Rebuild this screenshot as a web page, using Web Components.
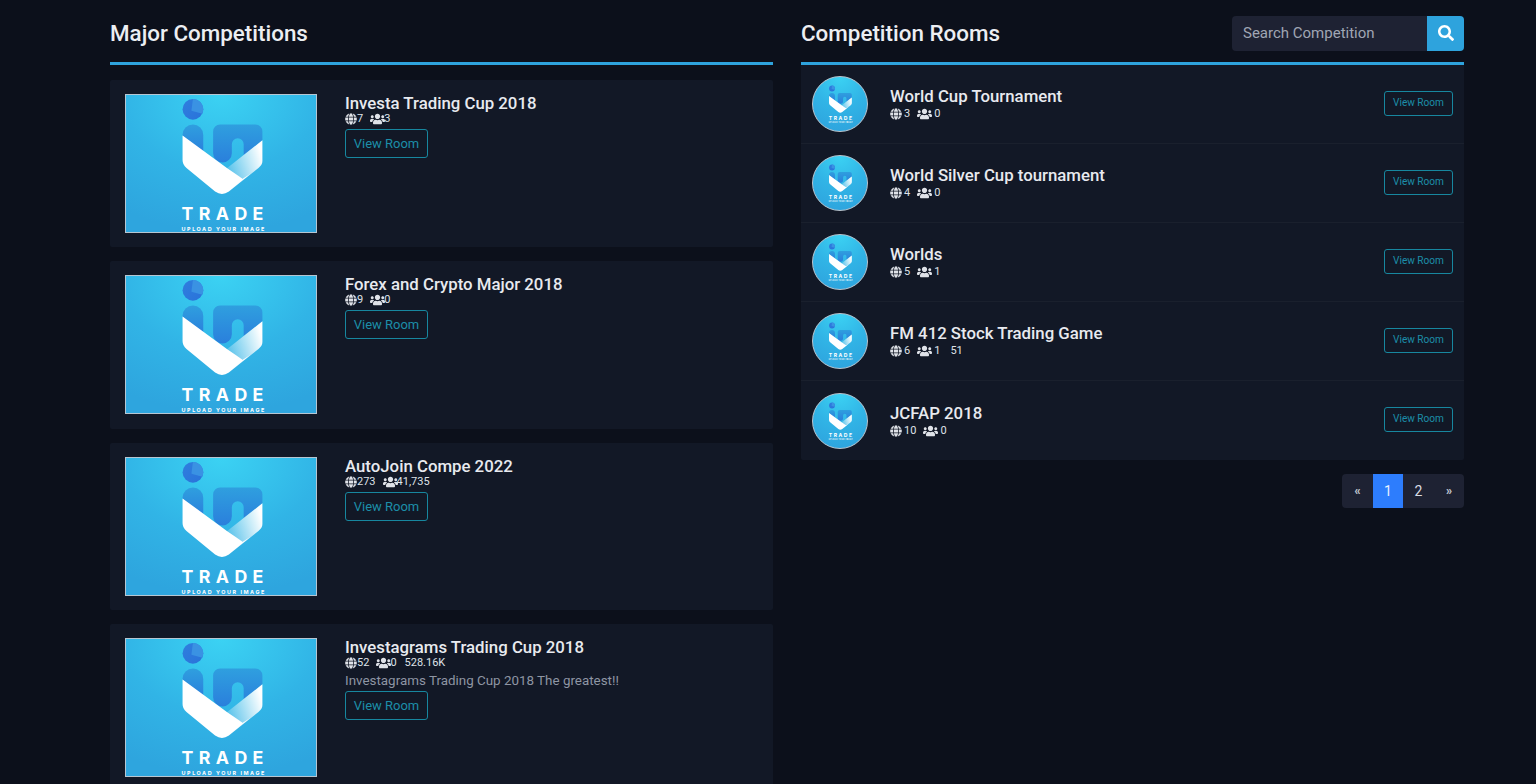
<!DOCTYPE html>
<html>
<head>
<meta charset="utf-8">
<title>Competitions</title>
<style>
  html, body { margin: 0; height: 100%; overflow: hidden; background: #0c101b; }
  body { font-family: Roboto, "Liberation Sans", sans-serif; color: #e8eaef; }
</style>
</head>
<body>
<competition-page>
  <section-column slot="left" heading="Major Competitions">
    <competition-card name="Investa Trading Cup 2018">
      <stat-line tight rooms="7" people="3"></stat-line>
    </competition-card>
    <competition-card name="Forex and Crypto Major 2018">
      <stat-line tight rooms="9" people="0"></stat-line>
    </competition-card>
    <competition-card name="AutoJoin Compe 2022">
      <stat-line tight rooms="273" people="41,735"></stat-line>
    </competition-card>
    <competition-card name="Investagrams Trading Cup 2018" about="Investagrams Trading Cup 2018 The greatest!!">
      <stat-line tight rooms="52" people="0" extra="528.16K"></stat-line>
    </competition-card>
  </section-column>

  <section-column slot="right" heading="Competition Rooms">
    <search-box slot="tools"></search-box>
    <room-list>
      <room-row name="World Cup Tournament"><stat-line rooms="3" people="0"></stat-line></room-row>
      <room-row name="World Silver Cup tournament"><stat-line rooms="4" people="0"></stat-line></room-row>
      <room-row name="Worlds"><stat-line rooms="5" people="1"></stat-line></room-row>
      <room-row name="FM 412 Stock Trading Game"><stat-line rooms="6" people="1" extra="51"></stat-line></room-row>
      <room-row name="JCFAP 2018"><stat-line rooms="10" people="0"></stat-line></room-row>
    </room-list>
    <page-nav></page-nav>
  </section-column>
</competition-page>

<script>
const GLOBE = "M336.5 160C322 70.7 287.8 8 248 8s-74 62.7-88.5 152h177zM152 256c0 22.2 1.2 43.5 3.3 64h185.3c2.1-20.5 3.3-41.8 3.3-64s-1.2-43.5-3.3-64H155.3c-2.1 20.5-3.3 41.8-3.3 64zm324.7-96c-28.6-67.9-86.5-120.4-158-141.6 24.4 33.8 41.2 84.7 50 141.6h108zM177.2 18.4C105.8 39.6 47.8 92.1 19.3 160h108c8.7-56.9 25.5-107.8 49.9-141.6zM487.4 192H372.7c2.1 21 3.3 42.5 3.3 64s-1.2 43-3.3 64h114.6c5.5-20.5 8.6-41.8 8.6-64s-3.1-43.5-8.5-64zM120 256c0-21.5 1.2-43 3.3-64H8.6C3.2 212.5 0 233.8 0 256s3.2 43.5 8.6 64h114.6c-2-21-3.2-42.5-3.2-64zm39.5 96c14.5 89.3 48.7 152 88.5 152s74-62.7 88.5-152h-177zm159.3 141.6c71.4-21.2 129.4-73.7 158-141.6h-108c-8.8 56.9-25.6 107.8-50 141.6zM19.3 352c28.6 67.9 86.5 120.4 158 141.6-24.4-33.8-41.2-84.7-50-141.6h-108z";
const USERS = "M96 224c35.3 0 64-28.7 64-64s-28.7-64-64-64-64 28.7-64 64 28.7 64 64 64zm448 0c35.3 0 64-28.7 64-64s-28.7-64-64-64-64 28.7-64 64 28.7 64 64 64zm32 32h-64c-17.6 0-33.5 7.1-45.1 18.6 40.3 22.1 68.9 62 75.1 109.4h66c17.7 0 32-14.3 32-32v-32c0-35.3-28.7-64-64-64zm-256 0c61.9 0 112-50.1 112-112S381.9 32 320 32 208 82.1 208 144s50.1 112 112 112zm76.8 32h-8.3c-20.8 10-43.9 16-68.5 16s-47.6-6-68.5-16h-8.3C179.6 288 128 339.6 128 403.2V432c0 26.5 21.5 48 48 48h288c26.5 0 48-21.5 48-48v-28.8c0-63.6-51.6-115.2-115.2-115.2zm-223.7-13.4C161.5 263.1 145.6 256 128 256H64c-35.3 0-64 28.7-64 64v32c0 17.7 14.3 32 32 32h65.9c6.3-47.4 34.9-87.3 75.2-109.4z";
const SEARCH = "M505 442.7L405.3 343c-4.5-4.5-10.6-7-17-7H372c27.6-35.3 44-79.7 44-128C416 93.1 322.9 0 208 0S0 93.1 0 208s93.1 208 208 208c48.3 0 92.7-16.4 128-44v16.3c0 6.4 2.5 12.5 7 17l99.7 99.7c9.4 9.4 24.6 9.4 33.9 0l28.3-28.3c9.4-9.4 9.4-24.6.1-34zM208 336c-70.7 0-128-57.2-128-128 0-70.7 57.2-128 128-128 70.7 0 128 57.2 128 128 0 70.7-57.2 128-128 128z";

class CompetitionPage extends HTMLElement {
  constructor() {
    super();
    this.attachShadow({ mode: "open" });
    this.shadowRoot.innerHTML = `
      <style>
        :host { display: grid; grid-template-columns: 663px 663px; column-gap: 28px; padding-left: 110px; height: 784px; overflow: hidden; }
      </style>
      <slot name="left"></slot>
      <slot name="right"></slot>`;
  }
}

class SectionColumn extends HTMLElement {
  constructor() {
    super();
    this.attachShadow({ mode: "open" });
    this.shadowRoot.innerHTML = `
      <style>
        :host { display: block; }
        header { display: flex; align-items: center; justify-content: space-between; height: 62px; box-sizing: border-box; padding-top: 5px; padding-bottom: 1px; }
        h2 { margin: 0; font: 500 22.4px/1.2 Roboto, sans-serif; color: #eceef2; }
        .rule { height: 3px; background: #2ea3dd; }
      </style>
      <header><h2></h2><slot name="tools"></slot></header>
      <div class="rule"></div>
      <slot></slot>`;
    this.shadowRoot.querySelector("h2").textContent = this.getAttribute("heading");
  }
}

class LogoArt extends HTMLElement {
  constructor() {
    super();
    this.attachShadow({ mode: "open" });
    this.shadowRoot.innerHTML = `
      <style>
        :host { display: block; background: radial-gradient(ellipse 95% 100% at 50% 0%, #3bd2f3 0%, #31b4e6 55%, #2ea5de 100%); box-sizing: border-box; overflow: hidden; }
        svg { display: block; width: 100%; height: 100%; }
        text { font-family: Inter, "Liberation Sans", sans-serif; font-weight: 700; fill: #fff; }
      </style>
      <svg viewBox="0 0 192 139" preserveAspectRatio="xMidYMid meet">
        <defs>
          <linearGradient id="dot" x1="0" y1="0" x2="1" y2="1"><stop offset="0" stop-color="#2f7fde"/><stop offset="1" stop-color="#2a72da"/></linearGradient>
          <linearGradient id="stem" x1="0" y1="0" x2="0" y2="1"><stop offset="0" stop-color="#2f9fdf"/><stop offset="1" stop-color="#2a7fdc"/></linearGradient>
          <linearGradient id="fold" x1="0" y1="0.75" x2="1" y2="0.35"><stop offset="0" stop-color="#fff" stop-opacity=".1"/><stop offset="1" stop-color="#fff"/></linearGradient>
        </defs>
        <circle cx="67.500" cy="14.500" r="10.500" fill="url(#dot)"/>
        <path d="M67.500 4A10.500 10.500 0 0 1 77 19L66 16Z" fill="#3a92e3"/>
        <path d="M57 41V40.500a10.500 10.500 0 0 1 21 0V60Z" fill="url(#stem)"/>
        <path d="M88 37a7 7 0 0 1 7-7h36a7 7 0 0 1 7 7v9l-19 15V50a6 6 0 0 0-12 0v9a9.500 9.500 0 0 1-19 0Z" fill="url(#stem)"/>
        <path d="M57 41 102 74 118 85 126 80 104 98Q97 103 90 98L61 74Q57 71 57 66Z" fill="#fff"/>
        <path d="M138 46V67Q138 71 134 74L104 98 118 85 101 75Z" fill="url(#fold)"/>
        <text x="56" y="127" font-size="18" textLength="83" lengthAdjust="spacing">TRADE</text>
        <text x="56" y="138" font-size="5.500" textLength="84" lengthAdjust="spacing">UPLOAD YOUR IMAGE</text>
      </svg>`;
  }
}

class StatLine extends HTMLElement {
  constructor() {
    super();
    this.attachShadow({ mode: "open" });
    const a = (n) => this.getAttribute(n);
    this.shadowRoot.innerHTML = `
      <style>
        :host { display: flex; align-items: center; height: 14px; font: 400 11px/14px Roboto, sans-serif; color: #dfe2e8; gap: 7px; white-space: nowrap; }
        span { display: inline-flex; align-items: center; gap: 2px; }
        :host([tight]) span { gap: 0; }
        :host([tight]) .extra { margin-left: 1px; }
        .extra { margin-left: 3px; }
        svg { display: block; height: 12px; fill: currentColor; }
        .globe { width: 12px; }
        .users { width: 15px; }
        :host([tight]) .users { margin-right: -1px; }
      </style>
      <span><svg class="globe" viewBox="0 0 496 512"><path d="${GLOBE}"/></svg>${a("rooms")}</span>
      <span><svg class="users" viewBox="0 0 640 512"><path d="${USERS}"/></svg>${a("people")}</span>
      ${a("extra") ? `<span class="extra">${a("extra")}</span>` : ""}`;
  }
}

class ViewButton extends HTMLElement {
  constructor() {
    super();
    this.attachShadow({ mode: "open" });
    this.shadowRoot.innerHTML = `
      <style>
        :host { display: inline-flex; align-items: center; justify-content: center; box-sizing: border-box; width: 83px; height: 29px; border: 1px solid #17879f; border-radius: 3px; color: #1c8ea8; font: 400 13px/1 Roboto, sans-serif; }
        :host([small]) { width: 69px; height: 25px; font-size: 10.100px; }
      </style>
      View Room`;
  }
}

class CompetitionCard extends HTMLElement {
  constructor() {
    super();
    this.attachShadow({ mode: "open" });
    const about = this.getAttribute("about");
    this.shadowRoot.innerHTML = `
      <style>
        :host { display: flex; box-sizing: border-box; height: 167.330px; margin: 15px 0 -1px; padding: 14px 15px; background: #121826; border-radius: 2px; }
        logo-art { flex: none; width: 192px; height: 139px; border: 1px solid #b6c6d2; }
        .body { margin-left: 28px; }
        h3 { margin: 0; font: 500 16.800px/18px Roboto, sans-serif; color: #e8eaef; }
        stat-line { margin-top: 7px; }
        p { margin: 4px 0 1px; font: 400 13.400px/14px Roboto, sans-serif; color: #8e95a3; }
        view-button { display: flex; margin-top: 3px; }
      </style>
      <logo-art></logo-art>
      <div class="body">
        <h3></h3>
        <slot></slot>
        ${about ? `<p>${about}</p>` : ""}
        <view-button></view-button>
      </div>`;
    this.shadowRoot.querySelector("h3").textContent = this.getAttribute("name");
  }
}

class RoomList extends HTMLElement {
  constructor() {
    super();
    this.attachShadow({ mode: "open" });
    this.shadowRoot.innerHTML = `
      <style>:host { display: block; background: #121826; border-radius: 0 0 2px 2px; }</style>
      <slot></slot>`;
  }
}

class RoomRow extends HTMLElement {
  constructor() {
    super();
    this.attachShadow({ mode: "open" });
    this.shadowRoot.innerHTML = `
      <style>
        :host { display: flex; align-items: center; box-sizing: border-box; height: 79px; padding: 0 11px; border-bottom: 1px solid #1a202d; }
        :host(:last-child) { border-bottom: 0; }
        logo-art { flex: none; width: 56px; height: 56px; border: 1px solid #b9c6d0; border-radius: 50%; }
        .body { flex: 1; margin-left: 22px; padding-bottom: 1px; }
        h3 { margin: 0 0 1px; font: 500 16.800px/20px Roboto, sans-serif; color: #e8eaef; }
        view-button { margin-bottom: 2px; }
      </style>
      <logo-art></logo-art>
      <div class="body"><h3></h3><slot></slot></div>
      <view-button small></view-button>`;
    this.shadowRoot.querySelector("h3").textContent = this.getAttribute("name");
  }
}

class SearchBox extends HTMLElement {
  constructor() {
    super();
    this.attachShadow({ mode: "open" });
    this.shadowRoot.innerHTML = `
      <style>
        :host { display: flex; width: 232px; height: 35px; border-radius: 4px; overflow: hidden; }
        .field { flex: 1; display: flex; align-items: center; padding-left: 11px; background: #1e2233; color: #a0a6b4; font: 400 15px/1 Roboto, sans-serif; }
        .go { flex: none; width: 37px; display: flex; align-items: center; justify-content: center; background: #2ea3dd; }
        svg { width: 16px; height: 16px; fill: #fff; }
      </style>
      <div class="field">Search Competition</div>
      <div class="go"><svg viewBox="0 0 512 512"><path d="${SEARCH}"/></svg></div>`;
  }
}

class PageNav extends HTMLElement {
  constructor() {
    super();
    this.attachShadow({ mode: "open" });
    this.shadowRoot.innerHTML = `
      <style>
        :host { display: flex; justify-content: flex-end; margin-top: 14px; }
        .nav { display: flex; height: 34px; background: #1e2233; border-radius: 4px; overflow: hidden; color: #d9dce3; font: 400 14px/34px Roboto, sans-serif; }
        span { display: block; text-align: center; width: 31px; }
        .end { font-size: 12px; font-weight: 900; color: #bfc3cc; }
        .on { width: 30px; background: #2d7dfd; color: #e9f1ff; }
      </style>
      <div class="nav"><span class="end">«</span><span class="on">1</span><span>2</span><span class="end" style="width:30px">»</span></div>`;
  }
}

customElements.define("logo-art", LogoArt);
customElements.define("stat-line", StatLine);
customElements.define("view-button", ViewButton);
customElements.define("competition-card", CompetitionCard);
customElements.define("room-list", RoomList);
customElements.define("room-row", RoomRow);
customElements.define("search-box", SearchBox);
customElements.define("page-nav", PageNav);
customElements.define("section-column", SectionColumn);
customElements.define("competition-page", CompetitionPage);
</script>
</body>
</html>
